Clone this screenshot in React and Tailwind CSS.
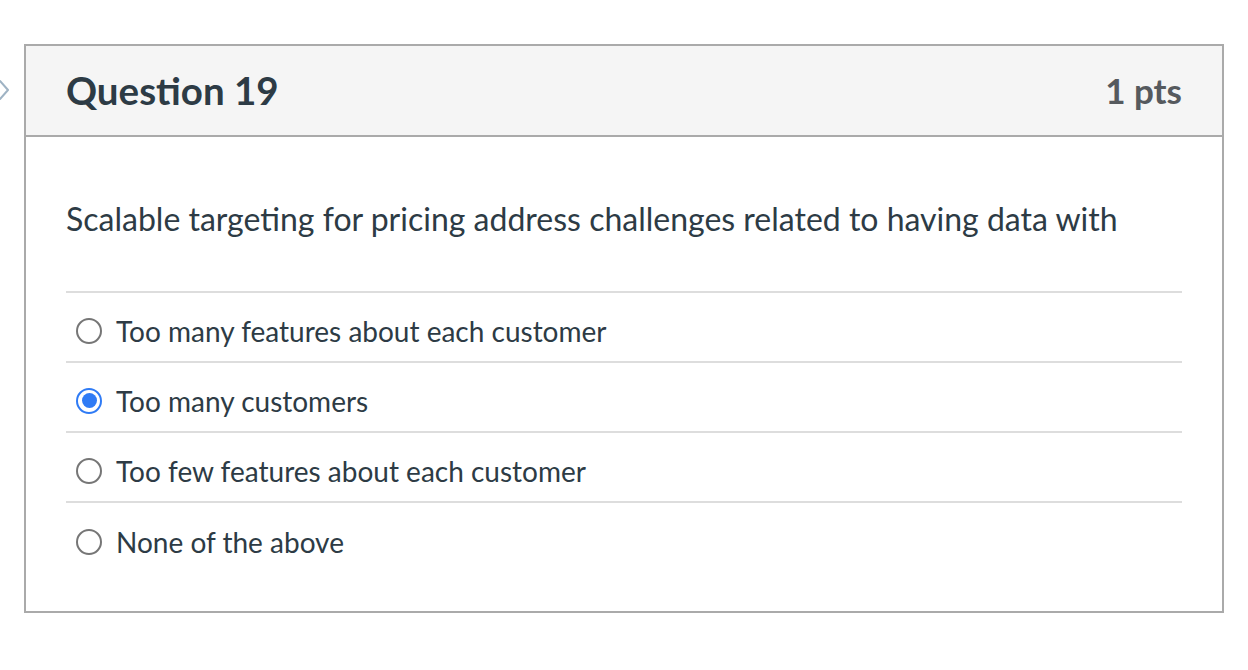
import React, { useState } from "react";

const answers = [
  "Too many features about each customer",
  "Too many customers",
  "Too few features about each customer",
  "None of the above",
];

const Radio = ({ checked }) => (
  <span
    className={`flex h-[26px] w-[26px] shrink-0 items-center justify-center rounded-full border-2 bg-white ${
      checked ? "border-[#2f7bf5]" : "border-[#767676]"
    }`}
  >
    {checked && <span className="h-[15px] w-[15px] rounded-full bg-[#2f7bf5]" />}
  </span>
);

const App = () => {
  const [selected, setSelected] = useState(1);

  return (
    <div
      className="relative min-h-[670px] bg-white pl-[24px] pt-[44px] text-[#2d3b45]"
      style={{ fontFamily: "Lato, 'Open Sans', sans-serif" }}
    >
      {/* bookmark marker peeking in from the left */}
      <svg
        className="absolute left-[-14px] top-[78px]"
        width="24"
        height="24"
        viewBox="0 0 24 24"
        fill="none"
      >
        <path
          d="M2 3h12l8 9-8 9H2"
          stroke="#9fb3c4"
          strokeWidth="2"
          strokeLinejoin="round"
        />
      </svg>

      <div className="w-[1200px] border-2 border-[#aaaaaa]">
        {/* Header */}
        <div className="flex h-[91px] items-center justify-between border-b-2 border-[#aaaaaa] bg-[#f5f5f5] px-[40px]">
          <h2 className="text-[38.5px] font-bold leading-none">Question 19</h2>
          <span className="text-[35px] font-bold leading-none text-[#565a5e]">
            1 pts
          </span>
        </div>

        {/* Body */}
        <div className="px-[40px] pb-[38px] pt-[62px]">
          <p className="text-[32px] leading-[40px]">
            Scalable targeting for pricing address challenges related to having data with
          </p>

          <div className="mt-[52px] border-t-2 border-[#dddddd]">
            {answers.map((answer, i) => (
              <label
                key={answer}
                onClick={() => setSelected(i)}
                className={`flex h-[70px] cursor-pointer items-center gap-[14px] pl-[10px] pt-[7px] ${
                  i < answers.length - 1 ? "border-b-2 border-[#dddddd]" : ""
                }`}
              >
                <Radio checked={selected === i} />
                <span className="text-[28px] leading-none">{answer}</span>
              </label>
            ))}
          </div>
        </div>
      </div>
    </div>
  );
};

export default App;
